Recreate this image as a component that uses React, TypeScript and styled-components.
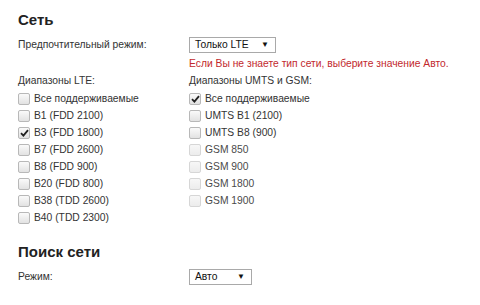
import React from 'react';
import styled, { createGlobalStyle } from 'styled-components';

const GlobalStyle = createGlobalStyle`
  html, body {
    margin: 0;
    padding: 0;
    background: #ffffff;
  }
  body {
    font-family: "Liberation Sans", Arial, sans-serif;
    color: #333333;
  }
`;

const Page = styled.div`
  width: 480px;
  height: 305px;
  box-sizing: border-box;
  padding: 10px 18px 0 18px;
  overflow: hidden;
`;

const SectionTitle = styled.h2<{ $top?: number }>`
  margin: ${p => p.$top ?? 0}px 0 6px 0;
  font-size: 15px;
  line-height: 20px;
  font-weight: 700;
  color: #222222;
`;

const Row = styled.div`
  display: grid;
  grid-template-columns: 171px 1fr;
  align-items: center;
`;

const Label = styled.div<{ $head?: boolean }>`
  font-size: 10.3px;
  line-height: ${p => (p.$head ? 18 : 17)}px;
  color: #333333;
  white-space: nowrap;
`;

const Hint = styled.div`
  grid-column: 2;
  margin-top: 2px;
  font-size: 10.3px;
  line-height: 17px;
  color: #c2282d;
  white-space: nowrap;
`;

const SelectBox = styled.div<{ $width: number }>`
  width: ${p => p.$width}px;
  height: 16px;
  box-sizing: border-box;
  border: 1px solid #a9a9a9;
  background: #ffffff;
  display: flex;
  align-items: center;
  justify-content: space-between;
  padding: 0 6px 0 5px;
  font-size: 10.3px;
  color: #111111;
`;

const Arrow = styled.span`
  font-size: 8px;
  color: #111111;
`;

const Columns = styled.div`
  display: grid;
  grid-template-columns: 171px 1fr;
  align-items: start;
`;

const Column = styled.div`
  display: flex;
  flex-direction: column;
`;

const Item = styled.label<{ $disabled?: boolean }>`
  display: flex;
  align-items: center;
  gap: 4px;
  height: 17px;
  font-size: 10.3px;
  color: ${p => (p.$disabled ? '#4a4a4a' : '#333333')};
`;

const Box = styled.span<{ $disabled?: boolean }>`
  width: 12px;
  height: 12px;
  box-sizing: border-box;
  border-radius: 2px;
  border: 1px solid ${p => (p.$disabled ? '#d6d6d6' : '#b8b8b8')};
  background: ${p =>
    p.$disabled
      ? 'linear-gradient(#f7f7f7, #ececec)'
      : 'linear-gradient(#fafafa, #e2e2e2)'};
  display: flex;
  align-items: center;
  justify-content: center;
  flex-shrink: 0;
`;

type Option = { label: string; checked?: boolean; disabled?: boolean };

const lte: Option[] = [
  { label: 'Все поддерживаемые' },
  { label: 'B1 (FDD 2100)' },
  { label: 'B3 (FDD 1800)', checked: true },
  { label: 'B7 (FDD 2600)' },
  { label: 'B8 (FDD 900)' },
  { label: 'B20 (FDD 800)' },
  { label: 'B38 (TDD 2600)' },
  { label: 'B40 (TDD 2300)' },
];

const umts: Option[] = [
  { label: 'Все поддерживаемые', checked: true },
  { label: 'UMTS B1 (2100)' },
  { label: 'UMTS B8 (900)' },
  { label: 'GSM 850', disabled: true },
  { label: 'GSM 900', disabled: true },
  { label: 'GSM 1800', disabled: true },
  { label: 'GSM 1900', disabled: true },
];

const Check = () => (
  <svg width="9" height="8" viewBox="0 0 9 8">
    <path d="M1 4.2 L3.4 6.6 L8 1.2" fill="none" stroke="#222" strokeWidth="1.8" />
  </svg>
);

const CheckItem = ({ label, checked, disabled }: Option) => (
  <Item $disabled={disabled}>
    <Box $disabled={disabled}>{checked && <Check />}</Box>
    {label}
  </Item>
);

export default function App() {
  return (
    <Page>
      <GlobalStyle />
      <SectionTitle>Сеть</SectionTitle>
      <Row>
        <Label>Предпочтительный режим:</Label>
        <SelectBox $width={87}>
          Только LTE <Arrow>▼</Arrow>
        </SelectBox>
      </Row>
      <Row>
        <Hint>Если Вы не знаете тип сети, выберите значение Авто.</Hint>
      </Row>
      <Columns>
        <Column>
          <Label $head>Диапазоны LTE:</Label>
          {lte.map(o => (
            <CheckItem key={o.label} {...o} />
          ))}
        </Column>
        <Column>
          <Label $head>Диапазоны UMTS и GSM:</Label>
          {umts.map(o => (
            <CheckItem key={o.label} {...o} />
          ))}
        </Column>
      </Columns>
      <SectionTitle $top={16}>Поиск сети</SectionTitle>
      <Row>
        <Label>Режим:</Label>
        <SelectBox $width={63}>
          Авто <Arrow>▼</Arrow>
        </SelectBox>
      </Row>
    </Page>
  );
}
